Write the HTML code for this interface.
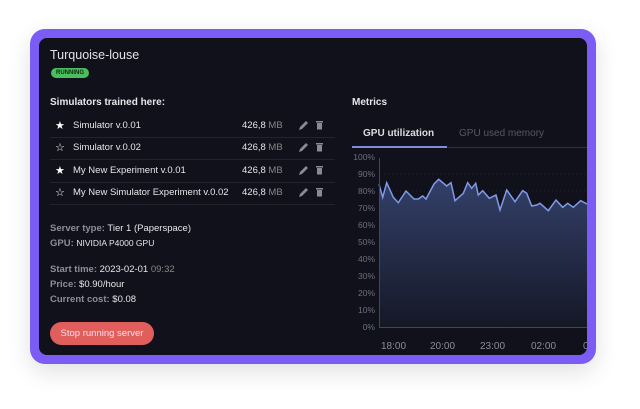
<!DOCTYPE html>
<html><head><meta charset="utf-8"><style>
*{margin:0;padding:0;box-sizing:border-box}
body{width:640px;height:409px;background:#fff;position:relative;overflow:hidden;font-family:"Liberation Sans",sans-serif;color:#e6e6ea}
.frame{position:absolute;left:30px;top:29px;width:566px;height:335px;background:#7b5cf5;border-radius:15px;box-shadow:0 8px 24px rgba(0,0,0,0.12)}
.panel{position:absolute;left:39px;top:38px;width:548px;height:317px;background:#10111a;border-radius:8px;overflow:hidden}
.a{position:absolute;white-space:nowrap}
.lbl{color:#8d8e98;font-weight:bold}
.row{position:absolute;left:50px;width:285px;height:1px;background:#22232d}
</style></head><body>
<div class="frame"></div>
<div class="panel"></div>
<div class="a" style="left:50px;top:48px;font-size:12.5px;color:#e2e2e8">Turquoise-louse</div>
<div class="a" style="left:51px;top:68px;width:38px;height:10px;background:#4cbd5e;border-radius:5px;color:#0d2a12;font-size:6px;font-weight:bold;line-height:10px;text-align:center">RUNNING</div>
<div class="a" style="left:50px;top:97px;font-size:10px;font-weight:bold">Simulators trained here:</div>

<div class="a" style="left:55px;top:119px;font-size:11px;color:#fff">★</div>
<div class="a" style="left:73px;top:120px;font-size:9.5px">Simulator v.0.01</div>
<div class="a" style="left:55px;top:141px;font-size:11px;color:#fff">☆</div>
<div class="a" style="left:73px;top:142px;font-size:9.5px">Simulator v.0.02</div>
<div class="a" style="left:55px;top:164px;font-size:11px;color:#fff">★</div>
<div class="a" style="left:73px;top:165px;font-size:9.5px">My New Experiment v.0.01</div>
<div class="a" style="left:55px;top:186px;font-size:11px;color:#fff">☆</div>
<div class="a" style="left:73px;top:187px;font-size:9.5px">My New Simulator Experiment v.0.02</div>
<div class="a" style="left:242px;top:120px;font-size:9.5px">426,8 <span style="color:#888">MB</span></div>
<div class="a" style="left:242px;top:142px;font-size:9.5px">426,8 <span style="color:#888">MB</span></div>
<div class="a" style="left:242px;top:165px;font-size:9.5px">426,8 <span style="color:#888">MB</span></div>
<div class="a" style="left:242px;top:187px;font-size:9.5px">426,8 <span style="color:#888">MB</span></div>
<svg class="a" style="left:296px;top:119px" width="32" height="84">
<g fill="#8a8a92">
<g id="ic"><path d="M3 11 L4 8 L10 2 L12 4 L6 10 Z"/><rect x="20" y="2" width="7" height="1.5"/><rect x="21" y="4" width="5" height="6.5"/></g>
<use href="#ic" y="22"/><use href="#ic" y="45"/><use href="#ic" y="67"/>
</g></svg>
<div class="row" style="top:137px"></div><div class="row" style="top:159px"></div><div class="row" style="top:182px"></div><div class="row" style="top:204px"></div>

<div class="a" style="left:50px;top:223px;font-size:9.5px"><span class="lbl">Server type:</span> Tier 1 (Paperspace)</div>
<div class="a" style="left:50px;top:238px;font-size:9.5px"><span class="lbl">GPU:</span> <span style="font-size:8.5px">NIVIDIA P4000 GPU</span></div>
<div class="a" style="left:50px;top:264px;font-size:9.5px"><span class="lbl">Start time:</span> 2023-02-01 <span style="color:#888">09:32</span></div>
<div class="a" style="left:50px;top:279px;font-size:9.5px"><span class="lbl">Price:</span> $0.90/hour</div>
<div class="a" style="left:50px;top:294px;font-size:9.5px"><span class="lbl">Current cost:</span> $0.08</div>
<div class="a" style="left:50px;top:322px;width:104px;height:23px;background:#e05f5c;border-radius:12px;font-size:9.5px;line-height:23px;text-align:center;color:#fde">Stop running server</div>

<div class="a" style="left:352px;top:97px;font-size:10px;font-weight:bold">Metrics</div>
<div class="a" style="left:363px;top:128px;font-size:10px;font-weight:bold;color:#ddd">GPU utilization</div>
<div class="a" style="left:459px;top:128px;font-size:10px;color:#555866">GPU used memory</div>
<div class="a" style="left:352px;top:147px;width:235px;height:1px;background:#2e303c"></div>
<div class="a" style="left:352px;top:146px;width:95px;height:2px;background:#7b8fd8"></div>

<svg class="a" style="left:340px;top:150px" width="247" height="205">
<defs><linearGradient id="g" x1="0" y1="0" x2="0" y2="1"><stop offset="0" stop-color="#34406a"/><stop offset="1" stop-color="#141826"/></linearGradient></defs>
<g font-family="Liberation Sans" font-size="8.5" fill="#6e7080" text-anchor="end">
<text x="35" y="10">100%</text><text x="35" y="27">90%</text><text x="35" y="44">80%</text><text x="35" y="61">70%</text><text x="35" y="78">60%</text><text x="35" y="95">50%</text><text x="35" y="112">40%</text><text x="35" y="129">30%</text><text x="35" y="146">20%</text><text x="35" y="163">10%</text><text x="35" y="180">0%</text>
</g>
<g stroke="#22242e" stroke-dasharray="1 3"><line x1="40" y1="24" x2="247" y2="24"/><line x1="40" y1="41" x2="247" y2="41"/><line x1="40" y1="58" x2="247" y2="58"/><line x1="40" y1="75" x2="247" y2="75"/><line x1="40" y1="92" x2="247" y2="92"/><line x1="40" y1="109" x2="247" y2="109"/><line x1="40" y1="126" x2="247" y2="126"/><line x1="40" y1="143" x2="247" y2="143"/><line x1="40" y1="160" x2="247" y2="160"/></g>
<polygon fill="url(#g)" points="39,34.3 42.7,47.3 46.7,32.7 53.3,47.3 58.3,52.7 66,41 74,49 78.3,49 82.7,46 86,49 94,34 98.7,29.3 106.7,36 111,32.7 115,50.7 123.3,43.3 127.7,32.7 131.7,38.3 135.7,33.3 138.3,45 142.7,40.7 149.3,48.3 156,45 160,60 166.7,40 175,51.7 182.7,40.7 186.7,43.3 191.7,56 196.7,55 200,53.3 208.3,60.7 216,50 222.7,57.3 227.7,53.3 233.3,57.3 240.7,50.7 247,54 247,177 39,177"/>
<polyline fill="none" stroke="#7f9ae6" stroke-width="1.5" points="39,34.3 42.7,47.3 46.7,32.7 53.3,47.3 58.3,52.7 66,41 74,49 78.3,49 82.7,46 86,49 94,34 98.7,29.3 106.7,36 111,32.7 115,50.7 123.3,43.3 127.7,32.7 131.7,38.3 135.7,33.3 138.3,45 142.7,40.7 149.3,48.3 156,45 160,60 166.7,40 175,51.7 182.7,40.7 186.7,43.3 191.7,56 196.7,55 200,53.3 208.3,60.7 216,50 222.7,57.3 227.7,53.3 233.3,57.3 240.7,50.7 247,54"/>
<line x1="39.5" y1="8" x2="39.5" y2="177" stroke="#444654"/>
<line x1="39" y1="177.5" x2="247" y2="177.5" stroke="#444654"/>
<g font-family="Liberation Sans" font-size="10" fill="#8a8c98"><text x="41" y="199">18:00</text><text x="90" y="199">20:00</text><text x="140" y="199">23:00</text><text x="191" y="199">02:00</text><text x="243" y="199">0</text></g>
</svg>
</body></html>
